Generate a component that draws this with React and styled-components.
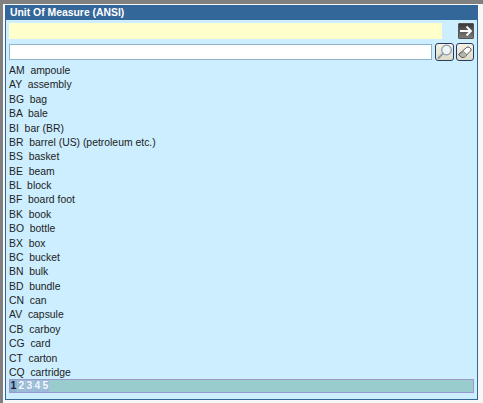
import React from "react";
import styled, { createGlobalStyle } from "styled-components";

const Global = createGlobalStyle`
  html, body { margin: 0; padding: 0; background: #f7f7f7; }
  body { font-family: "Liberation Sans", Arial, sans-serif; }
`;
const Frame = styled.div`
  width: 483px; height: 403px; box-sizing: border-box; overflow: hidden;
  border-top: 4px solid #808080; border-left: 3px solid #808080;
  background: #f7f7f7; padding: 1px 5px 0 2px;
`;
const Panel = styled.div`
  height: 395px; box-sizing: border-box; background: #cceeff;
  border: 1px solid #336699; border-top: 0; display: flex; flex-direction: column;
`;
const Title = styled.div`
  height: 15px; background: #336699; color: #fff; font-weight: 700; font-size: 10.4px;
  line-height: 16px; padding-left: 4px; flex: none;
`;
const Row = styled.div`
  display: flex; align-items: center; padding: 0 3px; flex: none;
  margin-top: ${p => p.$top}px; height: 18px;
`;
const Notice = styled.div`
  width: 433px; height: 16px; background: #ffffcc;
`;
const Search = styled.input`
  width: 423px; height: 16px; box-sizing: border-box; background: #fff;
  border: 1px solid #8fb4cc; padding: 0; margin: 0; outline: 0;
`;
const IconButton = styled.button`
  width: ${p => p.$w}px; height: ${p => p.$h}px; padding: 0; margin-left: ${p => p.$gap}px; flex: none;
  border: 1px solid ${p => p.$dark ? "#555" : "#2d3a66"}; border-radius: ${p => p.$dark ? 1 : 3}px;
  background: ${p => p.$dark ? "linear-gradient(#3a3a3a, #7a7a7a)" : "linear-gradient(#f4f3e6, #dcdbc6)"};
  display: flex; align-items: center; justify-content: center;
`;
const List = styled.ul`
  list-style: none; margin: 2px 0 0; padding: 0 0 0 3px; flex: none;
`;
const Item = styled.li`
  height: 14.38px; font-size: 10.4px; line-height: 16px; color: #222;
  white-space: pre;
`;
const Pager = styled.div`
  margin: 0 3px; height: 14px; box-sizing: border-box; background: #99cccc; border: 1px solid #9999cc;
  display: flex; align-items: center; font-size: 10.4px; font-weight: 700; flex: none;
`;
const Page = styled.span`
  width: 7px; text-align: center; line-height: 12px;
  color: ${p => p.$active ? "#16233f" : "#f2f8ff"};
  background: ${p => p.$active ? "#8fb2cf" : "#9db8d8"};
  margin-right: 1px;
`;

const items = [
  ["AM","ampoule"],["AY","assembly"],["BG","bag"],["BA","bale"],["BI","bar (BR)"],
  ["BR","barrel (US) (petroleum etc.)"],["BS","basket"],["BE","beam"],["BL","block"],
  ["BF","board foot"],["BK","book"],["BO","bottle"],["BX","box"],["BC","bucket"],
  ["BN","bulk"],["BD","bundle"],["CN","can"],["AV","capsule"],["CB","carboy"],
  ["CG","card"],["CT","carton"],["CQ","cartridge"],
];

export default function App() {
  return (
    <>
      <Global />
      <Frame>
        <Panel>
          <Title>Unit Of Measure (ANSI)</Title>
          <Row $top={2}>
            <Notice />
            <IconButton $dark $w={16} $h={16} $gap={16} aria-label="Go">
              <svg width="14" height="12" viewBox="0 0 14 12"><path d="M1 6h11M7.500 1.500L12 6l-4.500 4.500" fill="none" stroke="#fff" strokeWidth="1.800"/></svg>
            </IconButton>
          </Row>
          <Row $top={3}>
            <Search />
            <IconButton $w={19} $h={18} $gap={3} aria-label="Search">
              <svg width="17" height="16" viewBox="0 0 17 16"><circle cx="10.500" cy="6" r="4.800" fill="#eef6fb" stroke="#8d9aa6" strokeWidth="1.200"/><path d="M7 9.500l-5 5" stroke="#8d9aa6" strokeWidth="1.800"/></svg>
            </IconButton>
            <IconButton $w={18} $h={18} $gap={2} aria-label="Clear">
              <svg width="16" height="16" viewBox="0 0 16 16"><path d="M1.500 10.500L9.500 3.500q1.500-1 3 0l1.500 1.500q.5 1-.5 2l-6.500 6.500H4.500z" fill="#fff" stroke="#555"/><path d="M1.800 10.500l3 3h2.500l2.700-2.800-3.500-3.200z" fill="#b5b5ad" stroke="#555" strokeWidth=".6"/></svg>
            </IconButton>
          </Row>
          <List>
            {items.map(([c, n]) => <Item key={c}>{c}  {n}</Item>)}
          </List>
          <Pager>
            {[1,2,3,4,5].map(n => <Page key={n} $active={n===1}>{n}</Page>)}
          </Pager>
        </Panel>
      </Frame>
    </>
  );
}
